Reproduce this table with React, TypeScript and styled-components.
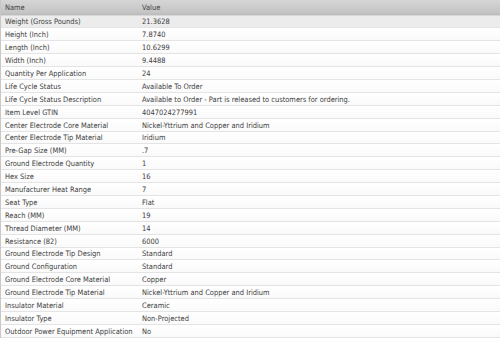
import styled, { createGlobalStyle } from "styled-components";

const GlobalStyle = createGlobalStyle`
  html, body {
    margin: 0;
    padding: 0;
    background: #ffffff;
  }
`;

const Table = styled.div`
  width: 500px;
  height: 338px;
  overflow: hidden;
  font-family: "DejaVu Sans Condensed", "DejaVu Sans", sans-serif;
  font-size: 7.45px;
  color: #404040;
  border-left: 1px solid #c8c8c8;
  box-sizing: border-box;
`;

const Header = styled.div`
  display: grid;
  grid-template-columns: 137px 1fr;
  height: 15.5px;
  align-items: center;
  background: linear-gradient(#d6d6d6, #c4c4c4 85%, #b9b9b9);
  border-bottom: 1px solid #d8d8d8;
  box-sizing: border-box;
`;

const Row = styled.div<{ $first?: boolean }>`
  display: grid;
  grid-template-columns: 137px 1fr;
  height: 12.9px;
  align-items: center;
  box-sizing: border-box;
  border-bottom: 1px solid #e4e4e4;
  background: ${({ $first }) =>
    $first ? "#ececec" : "linear-gradient(#ffffff, #fafafa)"};
`;

const Cell = styled.div`
  padding-left: 4px;
  padding-top: 1px;
  white-space: nowrap;
`;

const HeadCell = styled(Cell)`
  color: #454545;
`;

const rows: [string, string][] = [
  ["Weight (Gross Pounds)", "21.3628"],
  ["Height (Inch)", "7.8740"],
  ["Length (Inch)", "10.6299"],
  ["Width (Inch)", "9.4488"],
  ["Quantity Per Application", "24"],
  ["Life Cycle Status", "Available To Order"],
  ["Life Cycle Status Description", "Available to Order - Part is released to customers for ordering."],
  ["Item Level GTIN", "4047024277991"],
  ["Center Electrode Core Material", "Nickel-Yttrium and Copper and Iridium"],
  ["Center Electrode Tip Material", "Iridium"],
  ["Pre-Gap Size (MM)", ".7"],
  ["Ground Electrode Quantity", "1"],
  ["Hex Size", "16"],
  ["Manufacturer Heat Range", "7"],
  ["Seat Type", "Flat"],
  ["Reach (MM)", "19"],
  ["Thread Diameter (MM)", "14"],
  ["Resistance (82)", "6000"],
  ["Ground Electrode Tip Design", "Standard"],
  ["Ground Configuration", "Standard"],
  ["Ground Electrode Core Material", "Copper"],
  ["Ground Electrode Tip Material", "Nickel-Yttrium and Copper and Iridium"],
  ["Insulator Material", "Ceramic"],
  ["Insulator Type", "Non-Projected"],
  ["Outdoor Power Equipment Application", "No"],
];

const App = () => (
  <>
    <GlobalStyle />
    <Table>
      <Header>
        <HeadCell>Name</HeadCell>
        <HeadCell>Value</HeadCell>
      </Header>
      {rows.map(([name, value], i) => (
        <Row key={name} $first={i === 0}>
          <Cell>{name}</Cell>
          <Cell>{value}</Cell>
        </Row>
      ))}
    </Table>
  </>
);

export default App;
